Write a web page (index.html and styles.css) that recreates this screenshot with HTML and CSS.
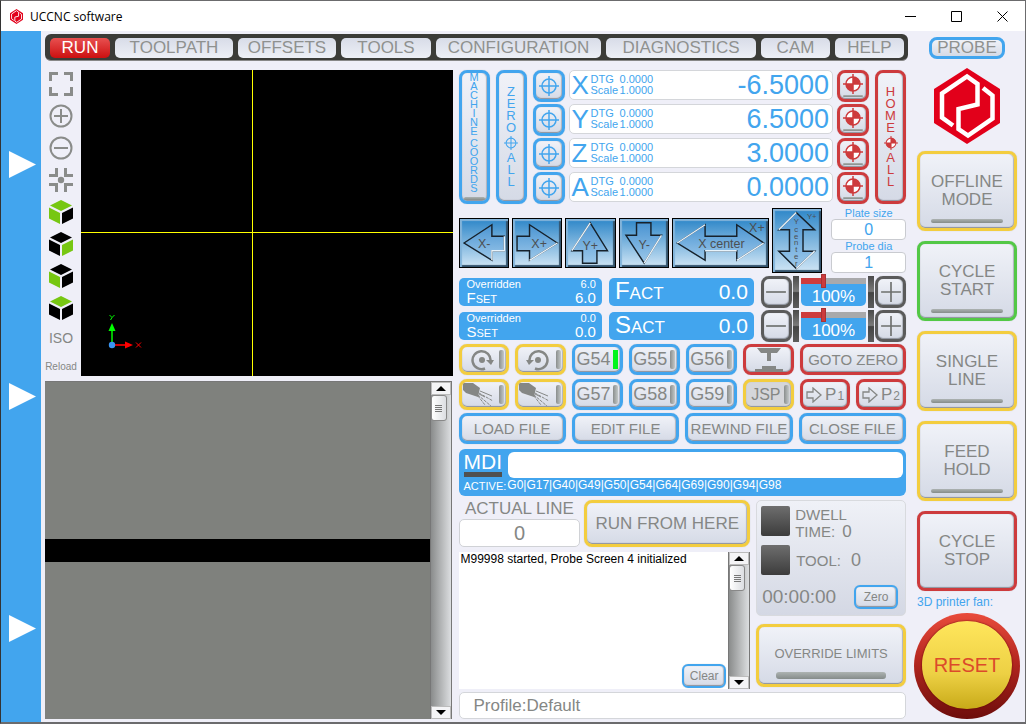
FILE: index.html
```html
<!DOCTYPE html>
<html lang="en">
<head>
<meta charset="utf-8">
<title>UCCNC software</title>
<link rel="stylesheet" href="styles.css">
</head>
<body>
<svg class="defs" aria-hidden="true">
  <defs>
    <linearGradient id="face" x1="0" y1="0" x2="0" y2="1"><stop offset="0" stop-color="#4a94d2"/><stop offset="1" stop-color="#9cc8ea"/></linearGradient>
  </defs>
  <symbol id="logo" viewBox="0 0 66 76">
    <path fill="#e2001a" d="M33 0 66 21V55L33 76 0 55V21z"/>
    <path fill="none" stroke="#fff" stroke-width="4.5" d="M19 57.500 8 49.500V25.500L33 8.500 43.500 16V36.500L24.500 41V61L34 67.500 58.500 50.500V27.500L49 20"/>
  </symbol>
  <symbol id="target" viewBox="0 0 20 20">
    <g fill="none" stroke="currentColor" stroke-width="1.500"><circle cx="10" cy="10" r="7"/><path d="M10 0V20M0 10H20"/></g>
  </symbol>
  <symbol id="home" viewBox="0 0 20 20">
    <circle cx="10" cy="10" r="7" fill="#fff" stroke="currentColor" stroke-width="1.500"/>
    <path fill="currentColor" d="M10 10V3A7 7 0 0 1 17 10zM10 10V17A7 7 0 0 1 3 10z"/>
    <path stroke="currentColor" stroke-width="1.500" d="M10 0V20M0 10H20"/>
  </symbol>
  <symbol id="cube" viewBox="0 0 24 24">
    <path class="cube-top" d="M12 0 23 5.500 12 11 1 5.500z"/>
    <path class="cube-left" d="M0 7.500 11 13V24L0 18.500z"/>
    <path class="cube-right" d="M24 7.500 13 13V24L24 18.500z"/>
  </symbol>
  <symbol id="spin" viewBox="0 0 24 22">
    <circle cx="12" cy="11" r="3" fill="currentColor"/>
    <path fill="none" stroke="currentColor" stroke-width="2.500" d="M15 19.500A9 9 0 1 1 20.500 12"/>
    <path fill="currentColor" d="M16 11H24L21 16z"/>
  </symbol>
  <symbol id="spray" viewBox="0 0 36 24">
    <path fill="currentColor" d="M0 0H10L17 5 15 14 3 10 0 7z"/>
    <path fill="none" stroke="currentColor" stroke-width="1" d="M17 8 29 13M16 11 22 14"/>
    <path fill="none" stroke="currentColor" stroke-width="1" stroke-dasharray="3 1" d="M16 10 30 18M15 12 28 23M15 13 22 22"/>
  </symbol>
  <symbol id="next" viewBox="0 0 16 16">
    <path fill="none" stroke="currentColor" stroke-width="1.300" d="M1 5H7V1L15 8 7 15V11H1z"/>
  </symbol>
</svg>

<div class="app">
  <header class="titlebar">
    <svg class="app-icon"><use href="#logo"/></svg>
    <span class="app-name">UCCNC software</span>
    <button class="win" aria-label="Minimize"><svg viewBox="0 0 11 11"><path d="M0 5.500H11"/></svg></button>
    <button class="win" aria-label="Maximize"><svg viewBox="0 0 11 11"><path d="M.5.500H10.500V10.500H.5z"/></svg></button>
    <button class="win" aria-label="Close"><svg viewBox="0 0 11 11"><path d="M.5.500 10.500 10.500M10.500.500.500 10.500"/></svg></button>
  </header>

  <div class="body">
    <aside class="drawer">
      <button aria-label="Open panel 1"><svg viewBox="0 0 27 27"><path d="M0 0 27 13.500 0 27z"/></svg></button>
      <button aria-label="Open panel 2"><svg viewBox="0 0 27 27"><path d="M0 0 27 13.500 0 27z"/></svg></button>
      <button aria-label="Open panel 3"><svg viewBox="0 0 27 27"><path d="M0 0 27 13.500 0 27z"/></svg></button>
    </aside>

    <main class="screen">
      <nav class="tabs">
        <button class="tab active">RUN</button>
        <button class="tab">TOOLPATH</button>
        <button class="tab">OFFSETS</button>
        <button class="tab">TOOLS</button>
        <button class="tab">CONFIGURATION</button>
        <button class="tab">DIAGNOSTICS</button>
        <button class="tab">CAM</button>
        <button class="tab">HELP</button>
      </nav>

      <div class="columns">
        <section class="graphics">
          <div class="view">
            <div class="view-tools">
              <button aria-label="Fit view"><svg viewBox="0 0 24 24"><path class="line" d="M1.500 9V1.500H9M15 1.500H22.500V9M22.500 15V22.500H15M9 22.500H1.500V15"/></svg></button>
              <button aria-label="Zoom in"><svg viewBox="0 0 24 24"><circle class="thin" cx="12" cy="12" r="10.500"/><path class="thin" d="M12 5V19M5 12H19"/></svg></button>
              <button aria-label="Zoom out"><svg viewBox="0 0 24 24"><circle class="thin" cx="12" cy="12" r="10.500"/><path class="thin" d="M5 12H19"/></svg></button>
              <button aria-label="Center view"><svg viewBox="0 0 24 24"><path class="line" d="M7.500 0V7.500H0M16.500 0V7.500H24M7.500 24V16.500H0M16.500 24V16.500H24"/><circle cx="12" cy="12" r="3.200" fill="#8a8c8a"/></svg></button>
              <button aria-label="Perspective view"><svg class="cube hi-top hi-left"><use href="#cube"/></svg></button>
              <button aria-label="Right view"><svg class="cube hi-right"><use href="#cube"/></svg></button>
              <button aria-label="Front view"><svg class="cube hi-left"><use href="#cube"/></svg></button>
              <button aria-label="Top view"><svg class="cube hi-top"><use href="#cube"/></svg></button>
              <button class="iso">ISO</button>
              <button class="reload">Reload</button>
            </div>
            <div class="viewport">
              <div class="cross-v"></div>
              <div class="cross-h"></div>
              <svg class="gizmo" viewBox="0 0 36 36">
                <path stroke="#0b0" stroke-width="2" d="M4 30V14"/><path fill="#0f0" d="M4 9 7.500 17H.5z"/>
                <path stroke="#c00" stroke-width="2" d="M5 31H20"/><path fill="#f00" d="M25 31 17 34.500V27.500z"/>
                <circle cx="4" cy="31" r="3.200" fill="#3a94f0"/>
                <path fill="none" stroke="#0f0" d="M1.500 1 4 3.500 6.500 1M4 3.500 2.500 6"/>
                <path fill="none" stroke="#f00" d="M28 28.500 33 33.500M33 28.500 28 33.500"/>
              </svg>
            </div>
          </div>
          <div class="code">
            <div class="code-list"><div class="code-line"></div></div>
            <div class="scroll">
              <button aria-label="Scroll code up"><svg viewBox="0 0 10 5"><path d="M5 0 10 5H0z"/></svg></button>
              <div class="thumb"><i></i><i></i><i></i><i></i></div>
              <button class="down" aria-label="Scroll code down"><svg viewBox="0 0 10 5"><path d="M0 0H10L5 5z"/></svg></button>
            </div>
          </div>
        </section>

        <section class="panel">
          <div class="dro">
            <button class="key blue tall coords"><span>M<br>A<br>C<br>H<br>I<br>N<br>E<br></span><span>C<br>O<br>O<br>R<br>D<br>S</span><i class="bar"></i></button>
            <button class="key blue tall all"><span>Z<br>E<br>R<br>O</span><svg><use href="#target"/></svg><span>A<br>L<br>L</span></button>
            <div class="axes">
              <div class="axis">
                <button class="key blue sq" aria-label="Zero X"><svg><use href="#target"/></svg></button>
                <div class="readout"><b>X</b><dl><dt>DTG</dt><dd>0.0000</dd><dt>Scale</dt><dd>1.0000</dd></dl><output>-6.5000</output></div>
                <button class="key red sq" aria-label="Home X"><svg><use href="#home"/></svg><i class="bar"></i></button>
              </div>
              <div class="axis">
                <button class="key blue sq" aria-label="Zero Y"><svg><use href="#target"/></svg></button>
                <div class="readout"><b>Y</b><dl><dt>DTG</dt><dd>0.0000</dd><dt>Scale</dt><dd>1.0000</dd></dl><output>6.5000</output></div>
                <button class="key red sq" aria-label="Home Y"><svg><use href="#home"/></svg><i class="bar"></i></button>
              </div>
              <div class="axis">
                <button class="key blue sq" aria-label="Zero Z"><svg><use href="#target"/></svg></button>
                <div class="readout"><b>Z</b><dl><dt>DTG</dt><dd>0.0000</dd><dt>Scale</dt><dd>1.0000</dd></dl><output>3.0000</output></div>
                <button class="key red sq" aria-label="Home Z"><svg><use href="#home"/></svg><i class="bar"></i></button>
              </div>
              <div class="axis">
                <button class="key blue sq" aria-label="Zero A"><svg><use href="#target"/></svg></button>
                <div class="readout"><b>A</b><dl><dt>DTG</dt><dd>0.0000</dd><dt>Scale</dt><dd>1.0000</dd></dl><output>0.0000</output></div>
                <button class="key red sq" aria-label="Home A"><svg><use href="#home"/></svg><i class="bar"></i></button>
              </div>
            </div>
            <button class="key red tall all"><span>H<br>O<br>M<br>E</span><svg><use href="#home"/></svg><span>A<br>L<br>L</span></button>
          </div>

          <div class="jog">
            <button class="jogkey"><svg viewBox="0 0 50 50"><path class="arrow" d="M4 25 33 6V18H46V33H33V43z"/><path class="shine" d="M33 43V33H46V18"/><text x="25" y="30">X-</text></svg></button>
            <button class="jogkey"><svg viewBox="0 0 50 50"><path class="arrow" d="M46 25 17 6V18H4V33H17V43z"/><path class="shine" d="M17 43 46 25"/><text x="27" y="30">X+</text></svg></button>
            <button class="jogkey"><svg viewBox="0 0 50 50"><path class="arrow" d="M25 4 43 33H32V46H17V33H6z"/><path class="shine" d="M6 33 25 4"/><text x="25" y="32">Y+</text></svg></button>
            <button class="jogkey"><svg viewBox="0 0 50 50"><path class="arrow" d="M25 46 43 17H32V4H17V17H6z"/><path class="shine" d="M25 46 43 17"/><text x="25" y="31">Y-</text></svg></button>
            <button class="jogkey wide"><svg viewBox="0 0 98 50"><path class="arrow" d="M4 25 33 6V18H66V6L94 25 66 43V33H33V43z"/><path class="shine" d="M33 6 4 25M66 43 94 25M33 33H66"/><text x="50" y="30">X center</text><text x="87" y="14">X+</text></svg></button>
            <button class="jogkey high"><svg viewBox="0 0 50 64"><path class="arrow" d="M24 3 43 21H31V43H43L24 61 6 43H17V21H6z"/><path class="shine" d="M6 21 24 3M24 61 43 43"/><g class="small"><text x="24" y="15">Y</text><text x="24" y="23">c</text><text x="24" y="30">e</text><text x="24" y="37">n</text><text x="24" y="44">t</text><text x="24" y="51">e</text><text x="24" y="58">r</text><text x="40" y="10">Y+</text></g></svg></button>
            <div class="probe-fields">
              <label for="plate">Plate size</label><input id="plate" value="0">
              <label for="dia">Probe dia</label><input id="dia" value="1">
            </div>
          </div>

          <div class="feed">
            <div class="tile set"><div><small>Overridden</small><span>F<em>SET</em></span></div><div class="nums"><small>6.0</small><span>6.0</span></div></div>
            <div class="tile act"><span>F<em>ACT</em></span><output>0.0</output></div>
            <button class="key dark step" aria-label="Feed down"><svg viewBox="0 0 20 20"><path d="M1 10H19"/></svg></button>
            <i class="post"></i>
            <div class="tile override"><input type="range" min="0" max="300" value="100" aria-label="Feed override"><output>100%</output></div>
            <i class="post"></i>
            <button class="key dark step" aria-label="Feed up"><svg viewBox="0 0 20 20"><path d="M1 10H19M10 1V19"/></svg></button>
          </div>
          <div class="feed">
            <div class="tile set"><div><small>Overridden</small><span>S<em>SET</em></span></div><div class="nums"><small>0.0</small><span>0.0</span></div></div>
            <div class="tile act"><span>S<em>ACT</em></span><output>0.0</output></div>
            <button class="key dark step" aria-label="Speed down"><svg viewBox="0 0 20 20"><path d="M1 10H19"/></svg></button>
            <i class="post"></i>
            <div class="tile override"><input type="range" min="0" max="300" value="100" aria-label="Speed override"><output>100%</output></div>
            <i class="post"></i>
            <button class="key dark step" aria-label="Speed up"><svg viewBox="0 0 20 20"><path d="M1 10H19M10 1V19"/></svg></button>
          </div>

          <div class="keys">
            <button class="key yellow" aria-label="Spindle clockwise"><svg class="spin"><use href="#spin"/></svg><i class="led"></i></button>
            <button class="key yellow" aria-label="Spindle counterclockwise"><svg class="spin flip"><use href="#spin"/></svg><i class="led"></i></button>
            <button class="key blue">G54<i class="led on"></i></button>
            <button class="key blue">G55<i class="led"></i></button>
            <button class="key blue">G56<i class="led"></i></button>
            <button class="key red" aria-label="Probe tool"><svg class="toolprobe" viewBox="0 0 28 24"><path d="M2 0H26L22 5H16V13H12V5H6zM7 18H21V21H28V24H0V21H7z"/></svg></button>
            <button class="key red goto">GOTO ZERO</button>
            <button class="key yellow" aria-label="Mist"><svg class="spray"><use href="#spray"/></svg><i class="led"></i></button>
            <button class="key yellow" aria-label="Flood"><svg class="spray"><use href="#spray"/></svg><i class="led"></i></button>
            <button class="key blue">G57<i class="led"></i></button>
            <button class="key blue">G58<i class="led"></i></button>
            <button class="key blue">G59<i class="led"></i></button>
            <button class="key yellow jsp">JSP<i class="led"></i></button>
            <button class="key red park"><svg><use href="#next"/></svg>P<small>1</small></button>
            <button class="key red park"><svg><use href="#next"/></svg>P<small>2</small></button>
          </div>

          <div class="files">
            <button class="key blue">LOAD FILE</button>
            <button class="key blue">EDIT FILE</button>
            <button class="key blue">REWIND FILE</button>
            <button class="key blue">CLOSE FILE</button>
          </div>

          <div class="mdi">
            <label for="mdi">MDI</label>
            <input id="mdi" type="text">
            <div class="modes"><span>ACTIVE:</span><span class="codes">G0|G17|G40|G49|G50|G54|G64|G69|G90|G94|G98</span></div>
          </div>

          <div class="lower">
            <div class="lower-left">
              <div class="run">
                <div class="actual"><label for="line">ACTUAL LINE</label><input id="line" value="0"></div>
                <button class="key yellow">RUN FROM HERE</button>
              </div>
              <div class="console">
                <div class="log"><p>M99998 started, Probe Screen 4 initialized</p><button class="key blue mini">Clear</button></div>
                <div class="scroll">
                  <button aria-label="Scroll log up"><svg viewBox="0 0 10 5"><path d="M5 0 10 5H0z"/></svg></button>
                  <div class="thumb"><i></i><i></i><i></i><i></i></div>
                  <button class="down" aria-label="Scroll log down"><svg viewBox="0 0 10 5"><path d="M0 0H10L5 5z"/></svg></button>
                </div>
              </div>
            </div>
            <div class="lower-right">
              <div class="status">
                <i class="lamp"></i><div class="dwell">DWELL<br>TIME: <output>0</output></div>
                <i class="lamp"></i><div class="tool">TOOL: <output>0</output></div>
                <div class="timer"><time>00:00:00</time><button class="key blue mini">Zero</button></div>
              </div>
              <button class="key yellow limits">OVERRIDE LIMITS<i class="bar"></i></button>
            </div>
          </div>

          <div class="profile">Profile:Default</div>
        </section>
      </div>
    </main>

    <aside class="controls">
      <button class="key blue probe">PROBE</button>
      <svg class="brand"><use href="#logo"/></svg>
      <button class="key yellow big">OFFLINE<br>MODE<i class="bar"></i></button>
      <button class="key green big">CYCLE<br>START<i class="bar"></i></button>
      <button class="key yellow big">SINGLE<br>LINE<i class="bar"></i></button>
      <button class="key yellow big">FEED<br>HOLD<i class="bar"></i></button>
      <button class="key red big">CYCLE<br>STOP</button>
      <span class="fan">3D printer fan:</span>
      <button class="reset"><span>RESET</span></button>
    </aside>
  </div>
</div>
</body>
</html>
```

FILE: styles.css
```css
:root {
  --blue: #42a5ee;
  --red: #cd3b3d;
  --yellow: #f3cd3f;
  --green: #53c846;
  --text: #858785;
  --bg: #efeff8;
  --face: linear-gradient(#f0f2f8, #d5dae6);
}
* { box-sizing: border-box; }
body { margin: 0; font-family: "Liberation Sans", Arial, sans-serif; color: var(--text); }
button, input { font: inherit; color: inherit; margin: 0; padding: 0; }
button { border: 0; background: none; display: flex; align-items: center; justify-content: center; }
svg { display: block; }
.defs { position: absolute; width: 0; height: 0; }

.app { min-height: 100vh; display: flex; flex-direction: column; background: var(--bg); border: 1px solid #6b6b6d; border-left-color: #333; border-bottom-width: 2px; }
.titlebar { height: 30px; background: #fff; display: flex; align-items: center; padding-left: 9px; }
.app-icon { width: 13px; height: 15px; }
.app-name { flex: 1; margin-left: 7px; font: 12px "Open Sans", "Noto Sans", sans-serif; color: #000; }
.win { width: 46px; height: 28px; }
.win svg { width: 11px; height: 11px; fill: none; stroke: #000; }

.body { flex: 1; display: flex; }
.drawer { width: 40px; background: var(--blue); display: flex; flex-direction: column; align-items: center; padding: 120px 0 0 2px; gap: 205px; }
.drawer svg { width: 27px; height: 27px; fill: #fff; }
.screen { flex: 1; min-width: 0; padding: 3px 0 3px 4px; display: flex; flex-direction: column; gap: 9px; }

.tabs { height: 27px; background: #3b3c38; border-radius: 6px; padding: 4px 4px 4px 5px; display: grid; grid-template-columns: 60fr 118fr 98fr 90fr 165fr 150fr 69fr 69fr; gap: 5px; border-bottom: 1px solid #888; }
.tab { background: linear-gradient(#d8dce8, #edf0f6); border-radius: 5px; font-size: 17px; color: #8f918f; }
.tab.active { background: linear-gradient(#e85050, #cc1010); color: #fff; }

.columns { flex: 1; display: flex; gap: 6px; padding-right: 2px; }
.graphics { flex: 408; min-width: 0; display: flex; flex-direction: column; gap: 5px; }
.panel { flex: 448; min-width: 0; display: flex; flex-direction: column; gap: 3px; }

.view { display: flex; height: 306px; }
.view-tools { width: 36px; display: flex; flex-direction: column; padding: 2px 4px 0 0; gap: 8px; }
.view-tools button { height: 24px; }
.view-tools svg { width: 24px; height: 24px; }
.line { fill: none; stroke: #8a8c8a; stroke-width: 3; }
.thin { fill: none; stroke: #8a8c8a; stroke-width: 2; }
.cube { --top: #000; --left: #000; --right: #000; }
.cube-top { fill: var(--top); }
.cube-left { fill: var(--left); }
.cube-right { fill: var(--right); }
.hi-top { --top: #77c712; }
.hi-left { --left: #77c712; }
.hi-right { --right: #77c712; }
.iso { font-size: 14px; }
.reload { font-size: 10px; }
.viewport { flex: 1; background: #000; position: relative; }
.cross-v { position: absolute; left: 46%; top: 0; bottom: 0; width: 1px; background: #ff0; }
.cross-h { position: absolute; top: 53%; left: 0; right: 0; height: 1px; background: #ff0; }
.gizmo { position: absolute; left: 27px; bottom: 26px; width: 36px; height: 36px; }

.code { flex: 1; display: flex; margin-right: 1px; border-top: 1px solid #777; }
.code-list { flex: 1; background: #7f817d; display: flex; flex-direction: column; justify-content: center; }
.code-line { height: 23px; background: #000; }
.scroll { width: 22px; background: linear-gradient(90deg, #8a8c8c, #dcdee0); display: flex; flex-direction: column; border: 1px solid #777; border-width: 0 1px; }
.scroll button { height: 13px; background: #f4f4f6; border: 1px solid #bbb; }
.scroll button svg { width: 10px; height: 5px; fill: #000; }
.scroll .down { margin-top: auto; }
.thumb { height: 26px; margin: 0 4px 0 0; background: linear-gradient(90deg, #fff, #dcdee2); border: 1px solid #888; border-radius: 3px; display: flex; flex-direction: column; justify-content: center; align-items: center; gap: 1px; }
.thumb i { width: 7px; height: 1px; background: #777; }

.key { --c: var(--blue); border: 3px solid var(--c); border-radius: 8px; background: var(--face); box-shadow: inset 0 -1px 1px #8d939d, inset -1px 0 1px #b4b9c2, 0 0 1px #b9bcc4; position: relative; white-space: nowrap; }
.blue { --c: var(--blue); }
.red { --c: var(--red); }
.yellow { --c: var(--yellow); }
.green { --c: var(--green); }
.dark { --c: #5b5b5b; }
.bar { position: absolute; left: 12%; right: 12%; bottom: 3px; height: 4px; border-radius: 3px; background: linear-gradient(#adb3b2, #858c8a); }

.dro { display: flex; gap: 6px; height: 134px; }
.tall { width: 31px; flex-direction: column; color: var(--blue); font-size: 13px; line-height: 12px; }
.tall.red { color: var(--red); }
.coords { font-size: 11px; line-height: 9px; gap: 3px; justify-content: flex-start; }
.coords .bar { left: 2px; right: 2px; bottom: 1px; height: 3px; }
.all svg { width: 20px; height: 14px; margin: 2px 0; }
.axes { flex: 1; display: flex; flex-direction: column; gap: 2px; }
.axis { flex: 1; display: flex; gap: 4px; }
.sq { width: 32px; color: var(--blue); }
.sq.red { color: var(--red); align-items: flex-start; padding-top: 1px; }
.sq svg { width: 20px; height: 20px; }
.sq .bar { height: 2px; bottom: 2px; }
.readout { flex: 1; height: 30px; background: #fff; border: 1px solid #d4d6da; border-radius: 5px; display: flex; align-items: center; padding: 0 3px 0 2px; color: var(--blue); }
.readout b { font-weight: 400; font-size: 26px; width: 19px; line-height: 28px; }
.readout dl { margin: 0; display: grid; grid-template-columns: 29px auto; font-size: 11px; line-height: 11px; }
.readout dd { margin: 0; }
.readout output { margin-left: auto; font-size: 27px; line-height: 28px; }

.jog { display: flex; gap: 3px; height: 65px; margin-top: 1px; align-items: flex-end; }
.jogkey { flex: 50; height: 50px; margin-bottom: 5px; background: linear-gradient(#2d86c8, #cfe5f5); border: 1px solid #000; box-shadow: inset 2px 2px 1px #83b4da, inset -2px -2px 1px #33536c; overflow: hidden; }
.jogkey svg { width: 100%; height: 100%; }
.wide { flex: 98; }
.high { height: 65px; margin-bottom: 0; }
.arrow { fill: url(#face); stroke: #16212b; stroke-width: 1.5; }
.shine { fill: none; stroke: #e8f3fb; stroke-width: 1.5; }
.jogkey text { font-size: 13px; fill: #4c4f52; text-anchor: middle; }
.jogkey .small text { font-size: 8px; }
.probe-fields { flex: 77; margin-left: 6px; display: flex; flex-direction: column; align-items: center; font-size: 11px; line-height: 12px; color: var(--blue); }
.probe-fields input { width: 100%; height: 21px; border: 1px solid #c9cbd0; border-radius: 4px; background: #fff; text-align: center; font-size: 16px; }

.feed { display: flex; height: 32px; align-items: center; }
.tile { background: var(--blue); color: #fff; border-radius: 5px; height: 28px; display: flex; justify-content: space-between; line-height: 14px; }
.tile em { font-style: normal; }
.set { flex: 143; padding: 0 6px 0 8px; }
.set > div { display: flex; flex-direction: column; }
.set small { font-size: 11px; line-height: 13px; }
.set span { font-size: 15px; line-height: 13px; }
.set em { font-size: 11px; }
.nums { text-align: right; }
.act { flex: 147; margin: 0 7px; padding: 0 6px; align-items: center; font-size: 24px; line-height: 28px; }
.act em { font-size: 17px; }
.act output { font-size: 21px; }
.step { width: 31px; height: 32px; }
.step svg { width: 22px; height: 22px; fill: none; stroke: #6e706e; stroke-width: 1.5; }
.post { width: 6px; height: 32px; margin: 0 1px; background: linear-gradient(#4a4a4a, #7a7a7a 48%, #444 52%, #5c5c5c); }
.override { flex: 72; min-width: 0; margin: 0 1px; flex-direction: column; align-items: center; justify-content: flex-start; font-size: 17px; line-height: 18px; border-radius: 0 0 5px 5px; }
.override input { appearance: none; width: 100%; height: 14px; margin: -4px 0 0; background: linear-gradient(90deg, var(--red) 35%, #a9a9ab 35%) 0 4px / 100% 6px no-repeat; }
.override input::-webkit-slider-thumb { appearance: none; width: 5px; height: 14px; background: var(--red); border: 1px solid #a93334; }

.keys { display: grid; grid-template-columns: repeat(6, 51fr) 50fr 50fr; grid-auto-rows: 31px; gap: 4px 6px; font-size: 18px; }
.keys .key { justify-content: flex-start; padding-left: 1px; min-width: 0; overflow: hidden; }
.feed + .feed, .feed + .keys { margin-top: -1px; }
.led { position: absolute; right: 2px; top: 3px; bottom: 3px; width: 5px; border-radius: 2px; background: linear-gradient(90deg, #8a8e8d, #c3c8c8); }
.led.on { background: #00f51a; border-radius: 0; }
.keys .spin { width: 24px; height: 22px; margin-left: 7px; }
.spin.flip { transform: scaleX(-1); }
.keys .spray { width: 36px; height: 24px; }
.toolprobe { width: 28px; height: 24px; fill: #858785; margin: 0 auto; }
.keys .goto { grid-column: span 2; font-size: 15px; justify-content: center; padding: 0; }
.keys .jsp { font-size: 16px; padding-left: 5px; background: #d5d6da; }
.keys .park { justify-content: center; padding: 0; font-size: 17px; gap: 1px; }
.park svg { width: 16px; height: 16px; margin-right: 2px; }
.park small { font-size: 12px; padding-top: 3px; }
.files { display: grid; grid-template-columns: repeat(4, 1fr); grid-auto-rows: 31px; gap: 6px; font-size: 15px; }

.mdi { margin-top: 2px; height: 47px; background: var(--blue); border-radius: 6px; padding: 3px 3px 0 5px; display: grid; grid-template-columns: 40px 1fr; grid-template-rows: 26px 16px; column-gap: 4px; color: #fff; }
.mdi label { font-size: 21px; line-height: 20px; border-bottom: 5px solid #505050; width: 38px; height: 25px; }
.mdi input { border: 0; border-radius: 6px; background: #fff; color: #333; width: 100%; padding: 0 6px; }
.modes { grid-column: span 2; font-size: 11px; line-height: 16px; display: flex; gap: 1px; white-space: nowrap; }
.codes { font-size: 12px; line-height: 14px; }

.lower { flex: 1; display: flex; gap: 6px; }
.lower-left { flex: 292; min-width: 0; display: flex; flex-direction: column; gap: 5px; }
.lower-right { flex: 150; min-width: 0; display: flex; flex-direction: column; gap: 8px; padding-top: 1px; }
.run { display: flex; gap: 4px; font-size: 17px; height: 48px; }
.actual { flex: 122; min-width: 0; display: flex; flex-direction: column; align-items: center; line-height: 20px; }
.actual input { width: 100%; height: 28px; border: 1px solid #d0d2d6; border-radius: 5px; background: #fff; text-align: center; font-size: 20px; }
.run .key { flex: 160; min-width: 0; margin-top: 1px; }
.console { flex: 1; display: flex; }
.log { flex: 1; background: #fff; color: #000; font-size: 12px; display: flex; flex-direction: column; justify-content: space-between; padding: 0 2px 1px; }
.log p { margin: 0; line-height: 14px; }
.mini { border-width: 2px; border-radius: 6px; width: 44px; height: 24px; font-size: 12px; color: var(--text); }
.log .mini { align-self: flex-end; }
.status { height: 116px; border: 1px solid #d8dade; border-radius: 5px; background: linear-gradient(#eff1f7, #d4d8e4); padding: 5px 6px 5px 4px; display: grid; grid-template-columns: 29px 1fr; grid-template-rows: 31px 31px 1fr; gap: 8px 5px; font-size: 16px; }
.lamp { height: 30px; background: linear-gradient(#6e6e6e, #3c3c3c); border-radius: 2px; }
.dwell { line-height: 17px; font-size: 15px; }
.dwell output, .tool output { margin-left: 3px; font-size: 17px; }
.tool output { margin-left: 6px; font-size: 18px; }
.tool { padding-left: 1px; line-height: 30px; font-size: 15px; }
.timer { grid-column: span 2; display: flex; justify-content: space-between; align-items: center; font-size: 19px; padding: 0 1px; }
.limits { height: 63px; font-size: 13px; padding-bottom: 4px; }
.limits .bar { bottom: 5px; height: 7px; }
.profile { height: 27px; background: #fff; border: 1px solid #d4d6da; border-radius: 5px; padding-left: 14px; font-size: 17px; line-height: 25px; }

.controls { width: 117px; padding: 6px 5px 0 6px; display: flex; flex-direction: column; align-items: center; }
.probe { width: 76px; height: 22px; font-size: 17px; color: #8f918f; box-shadow: none; }
.brand { width: 66px; height: 76px; margin: 9px 0 7px; }
.big { width: 100px; height: 80px; margin-bottom: 10px; font-size: 17px; line-height: 18px; }
.big .bar { bottom: 5px; }
.fan { align-self: flex-start; margin: -10px 0 0 3px; font-size: 12px; line-height: 22px; color: var(--blue); white-space: nowrap; }
.reset { width: 106px; height: 106px; border-radius: 50%; padding: 8px 8px 10px; background: linear-gradient(#e94c3c, #b52720 45%, #6d0d0b); flex: none; }
.reset span { width: 100%; height: 100%; border-radius: 50%; background: linear-gradient(#ffe65c, #edd044 60%, #c8aa18); color: #dc4a2b; font-size: 20px; display: flex; align-items: center; justify-content: center; box-shadow: 0 0 2px #500; }
```
